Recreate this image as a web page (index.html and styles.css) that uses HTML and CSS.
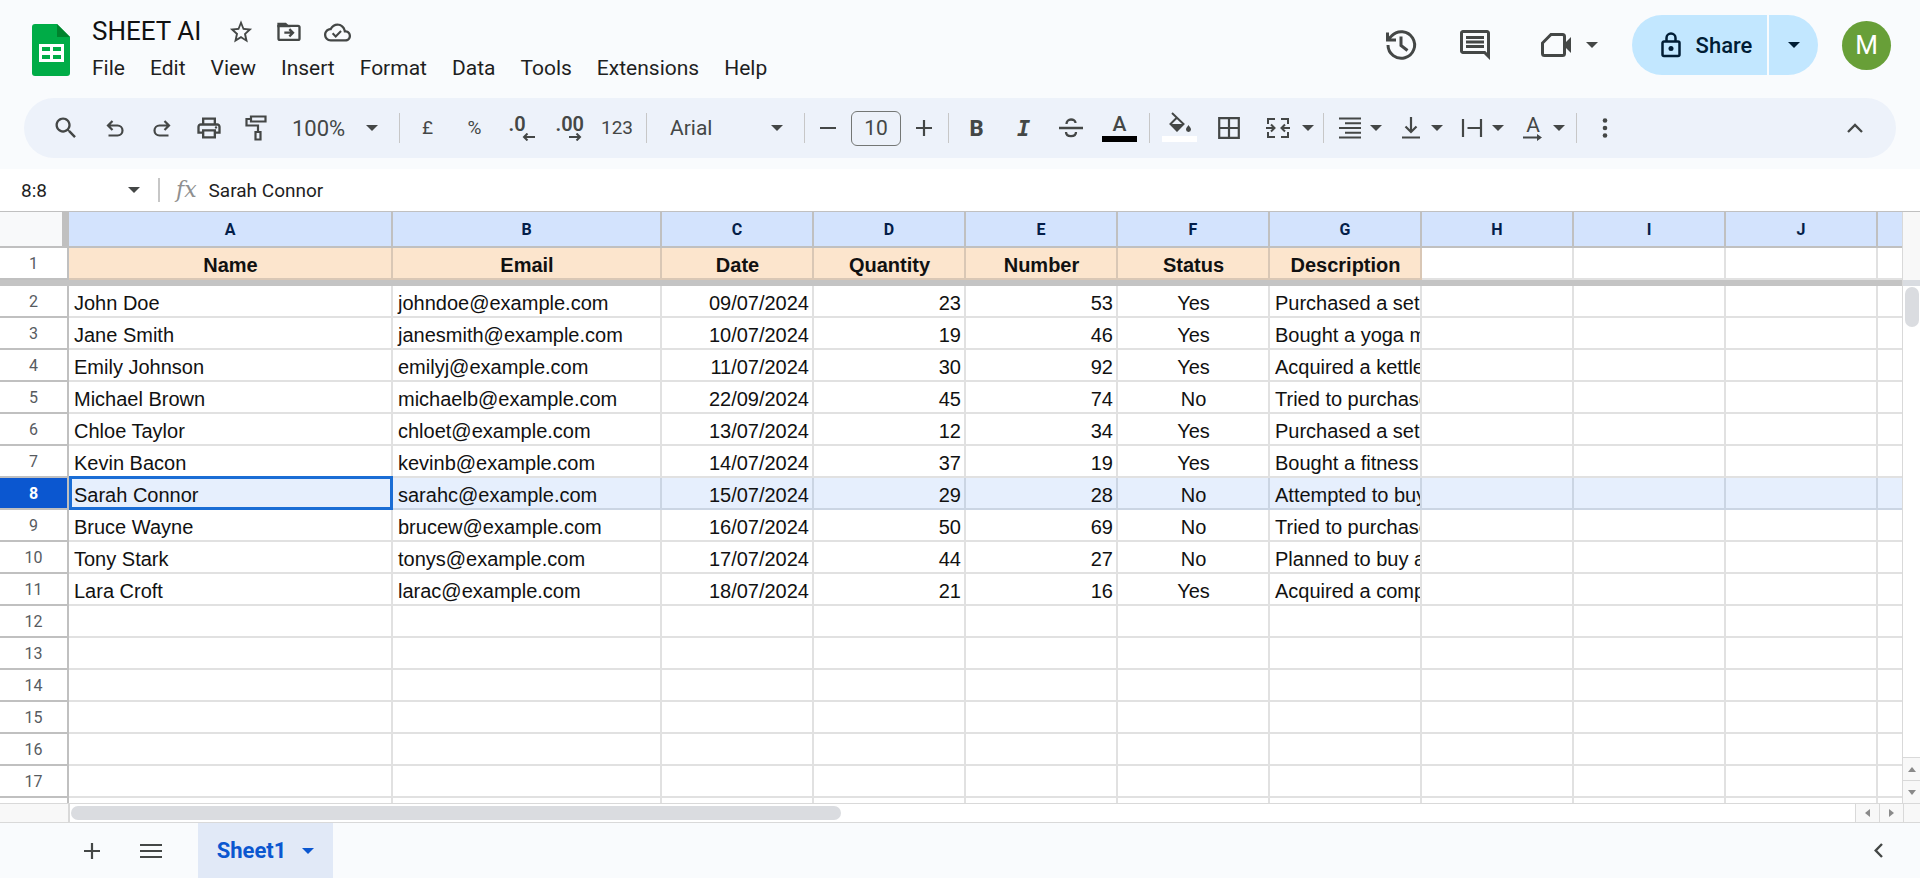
FILE: index.html
```html
<!DOCTYPE html>
<html lang="en">
  <head>
    <meta charset="utf-8">
    <meta name="viewport" content="width=device-width, initial-scale=1">
    <title>SHEET AI</title>
    <link rel="stylesheet" href="styles.css">
  </head>

  <body>
    <!-- shared icons -->
    <svg class="sprite" aria-hidden="true">
      <symbol id="caret" viewBox="0 0 12 6"><path d="M0 0h12L6 6z"/></symbol>
    </svg>

    <header class="header">
      <svg class="logo" viewBox="0 0 38 52">
        <path fill="#00ac47" d="M3 0h22l13 13v36a3 3 0 0 1-3 3H3a3 3 0 0 1-3-3V3a3 3 0 0 1 3-3z"/>
        <path fill="#00832d" d="M25 0l13 13H25z"/>
        <path fill="#fff" fill-rule="evenodd" d="M7 20h25v18H7zM10 23v4h8v-4zM21 23v4h8v-4zM10 31v4h8v-4zM21 31v4h8v-4z"/>
      </svg>

      <div class="doc">
        <div class="doc-title">
          <h1>SHEET AI</h1>
          <button class="title-btn" aria-label="Star">
            <svg width="28" height="28" viewBox="0 0 24 24"><path d="M21.5 9.24l-6.9-.62L12 2 9.4 8.63l-6.9.61 5.16 4.73L6.12 21 12 17.27 17.88 21l-1.53-7.03zM12 15.4l-3.46 2.27.9-4.28-3.12-2.88 4.08-.38L12 6.1l1.6 4.04 4.08.38-3.12 2.88.9 4.28z"/></svg>
          </button>
          <button class="title-btn" aria-label="Move">
            <svg width="28" height="28" viewBox="0 0 24 24" fill="none" stroke="currentColor" stroke-width="2"><path d="M3 6v11.5c0 .8.5 1.3 1.300 1.300h15.400c.8 0 1.300-.5 1.300-1.300V8c0-.8-.5-1.300-1.300-1.300H3M8 12.600h7M12.300 9.500l3.100 3.100-3.100 3.100"/><path d="M3 7V5h6l2 2z" fill="currentColor"/></svg>
          </button>
          <button class="title-btn" aria-label="Document status">
            <svg width="27" height="27" viewBox="0 0 24 24"><path d="M19.35 10.04C18.67 6.59 15.64 4 12 4 9.11 4 6.61 5.64 5.36 8.04 2.35 8.36 0 10.9 0 14c0 3.31 2.69 6 6 6h13c2.76 0 5-2.24 5-5 0-2.64-2.05-4.78-4.65-4.96zM19 18H6c-2.21 0-4-1.79-4-4 0-2.05 1.53-3.76 3.56-3.97l1.07-.11.5-.95C8.08 7.14 9.94 6 12 6c2.62 0 4.88 1.86 5.39 4.43l.3 1.5 1.53.11c1.56.1 2.78 1.41 2.78 2.96 0 1.65-1.35 3-3 3zm-8.600-3.820l-2.090-2.090-1.310 1.310 3.400 3.400 5.400-5.400-1.310-1.310z"/></svg>
          </button>
        </div>
        <nav class="menu">
          <button>File</button>
          <button>Edit</button>
          <button>View</button>
          <button>Insert</button>
          <button>Format</button>
          <button>Data</button>
          <button>Tools</button>
          <button>Extensions</button>
          <button>Help</button>
        </nav>
      </div>

      <div class="actions">
        <button class="action-btn" aria-label="History">
          <svg width="34" height="34" viewBox="0 0 34 34" fill="none" stroke="currentColor" stroke-width="3"><path d="M4 17a13.300 13.300 0 1 0 3.500-9L4 11.500M3.500 4.500V12H12M17 8.500v9l6.500 5"/></svg>
        </button>
        <button class="action-btn" aria-label="Comments">
          <svg width="36" height="36" viewBox="0 0 24 24"><path d="M22 4c0-1.100-.9-2-2-2H4c-1.100 0-2 .9-2 2v12c0 1.100.9 2 2 2h14l4 4zM20 4v13.170L18.830 16H4V4zM6 12h12v2H6zM6 9h12v2H6zM6 6h12v2H6z"/></svg>
        </button>
        <button class="meet-btn" aria-label="Join a call">
          <svg width="30" height="26" viewBox="0 0 30 26"><path fill="none" stroke="currentColor" stroke-width="3" d="M10 2.500h11.500a2 2 0 0 1 2 2v17a2 2 0 0 1-2 2H3.500a2 2 0 0 1-2-2V11z"/><path d="M23 12l7-7v16l-7-7z"/></svg>
          <svg class="caret"><use href="#caret"/></svg>
        </button>
        <div class="share">
          <button class="share-main">
            <svg width="20" height="26" viewBox="0 0 20 26"><path fill="none" stroke="currentColor" stroke-width="2.500" d="M3 9.500h14a1.500 1.500 0 0 1 1.500 1.500v11.500a1.500 1.500 0 0 1-1.500 1.500H3a1.500 1.500 0 0 1-1.500-1.500V11A1.500 1.500 0 0 1 3 9.500zM5.500 9.500V6a4.500 4.500 0 0 1 9 0v3.500"/><circle cx="10" cy="16.500" r="2.500"/></svg>
            Share
          </button>
          <button class="share-more" aria-label="Share options"><svg class="caret"><use href="#caret"/></svg></button>
        </div>
        <button class="avatar">M</button>
      </div>
    </header>

    <div class="toolbar">
      <button class="tb search" aria-label="Search">
        <svg width="28" height="28" viewBox="0 0 24 24"><path d="M15.5 14h-.79l-.28-.27C15.41 12.59 16 11.11 16 9.5 16 5.91 13.09 3 9.5 3S3 5.91 3 9.5 5.91 16 9.5 16c1.61 0 3.09-.59 4.23-1.57l.27.28v.79l5 4.99L20.49 19l-4.99-5zm-6 0C7.01 14 5 11.99 5 9.5S7.01 5 9.5 5 14 7.01 14 9.5 11.99 14 9.5 14z"/></svg>
      </button>
      <button class="tb" aria-label="Undo">
        <svg width="20" height="20" viewBox="0 0 20 20" fill="none" stroke="currentColor" stroke-width="2.200"><path d="M7.500 3L3 7.500 7.500 12M3 7.500h9.500a4.700 4.700 0 0 1 0 10H3.500"/></svg>
      </button>
      <button class="tb" aria-label="Redo">
        <svg width="20" height="20" viewBox="0 0 20 20" fill="none" stroke="currentColor" stroke-width="2.200"><path d="M12.500 3L17 7.500 12.500 12M17 7.500H7.500a4.700 4.700 0 0 0 0 10h9"/></svg>
      </button>
      <button class="tb" aria-label="Print">
        <svg width="28" height="28" viewBox="0 0 24 24"><path fill-rule="evenodd" d="M19 8h-1V3H6v5H5c-1.660 0-3 1.340-3 3v6h4v4h12v-4h4v-6c0-1.660-1.340-3-3-3zM8 5h8v3H8zM16 19H8v-4h8zM18 15v-2H6v2H4v-4c0-.55.45-1 1-1h14c.55 0 1 .45 1 1v4z"/><circle cx="18" cy="11.500" r="1"/></svg>
      </button>
      <button class="tb" aria-label="Paint format">
        <svg width="22" height="26" viewBox="0 0 22 26" fill="none" stroke="currentColor" stroke-width="2.200"><path d="M6 1.500h14.500v5H6zM6 4H1.500v6.500h11.500v6M10.500 17h5v7.500h-5z"/></svg>
      </button>
      <label class="pick zoom">
        <select aria-label="Zoom"><option>100%</option></select>
        <svg class="caret"><use href="#caret"/></svg>
      </label>
      <span class="sep"></span>
      <button class="tb glyph">£</button>
      <button class="tb glyph">%</button>
      <button class="tb decimals" aria-label="Decrease decimal places">
        <span>.0</span>
        <svg width="13" height="8" viewBox="0 0 13 8" fill="none" stroke="currentColor" stroke-width="2"><path d="M13 4H2M5.500 0.500L2 4l3.500 3.500"/></svg>
      </button>
      <button class="tb decimals" aria-label="Increase decimal places">
        <span>.00</span>
        <svg width="13" height="8" viewBox="0 0 13 8" fill="none" stroke="currentColor" stroke-width="2"><path d="M0 4h11M7.500 0.500L11 4 7.500 7.500"/></svg>
      </button>
      <button class="tb glyph wide">123</button>
      <span class="sep"></span>
      <label class="pick font">
        <select aria-label="Font"><option>Arial</option></select>
        <svg class="caret"><use href="#caret"/></svg>
      </label>
      <span class="sep"></span>
      <div class="size">
        <button aria-label="Decrease font size"><svg width="16" height="16" viewBox="0 0 16 16" fill="none" stroke="currentColor" stroke-width="2.200"><path d="M0 8h16"/></svg></button>
        <input type="text" value="10" aria-label="Font size">
        <button aria-label="Increase font size"><svg width="16" height="16" viewBox="0 0 16 16" fill="none" stroke="currentColor" stroke-width="2.200"><path d="M0 8h16M8 0v16"/></svg></button>
      </div>
      <span class="sep"></span>
      <button class="tb bold">B</button>
      <button class="tb italic">I</button>
      <button class="tb" aria-label="Strikethrough">
        <svg width="24" height="22" viewBox="0 0 24 22" fill="none" stroke="currentColor" stroke-width="2.300"><path d="M0 11h24M7.500 7c0-2.500 2-4.500 4.500-4.500S16.500 4 16.500 6M7 15c0 2.500 2 4.200 5 4.200s5-1.700 5-4.200"/></svg>
      </button>
      <button class="tb color">
        <span>A</span>
        <i class="swatch black"></i>
      </button>
      <span class="sep"></span>
      <button class="tb color" aria-label="Fill colour">
        <svg width="24" height="22" viewBox="0 0 24 22"><path fill="none" stroke="currentColor" stroke-width="2" d="M4 1l11.500 11-6.500 6.500L2.500 12 9 5.500"/><path d="M2 12h14l-7 7.500zM20.500 13c1.500 2 2.500 3.300 2.500 4.500a2.500 2.500 0 0 1-5 0c0-1.200 1-2.500 2.500-4.500z"/></svg>
        <i class="swatch"></i>
      </button>
      <button class="tb" aria-label="Borders">
        <svg width="22" height="22" viewBox="0 0 22 22" fill="none" stroke="currentColor" stroke-width="2.200"><path d="M1.200 1.200h19.600v19.600H1.200zM11 1v20M1 11h20"/></svg>
      </button>
      <button class="drop merge" aria-label="Merge cells">
        <svg width="24" height="22" viewBox="0 0 24 22" fill="none" stroke="currentColor" stroke-width="2"><path d="M9 2H2v5M9 20H2v-5M15 2h7v5M15 20h7v-5M0 11h8M5 7.500L8.500 11 5 14.500M24 11h-8M19 7.500L15.500 11l3.500 3.500"/></svg>
        <svg class="caret"><use href="#caret"/></svg>
      </button>
      <span class="sep"></span>
      <button class="drop" aria-label="Horizontal align">
        <svg width="24" height="22" viewBox="0 0 24 22" fill="none" stroke="currentColor" stroke-width="2"><path d="M1 1.500h22M7 6.200h16M1 11h22M7 15.800h16M1 20.500h22"/></svg>
        <svg class="caret"><use href="#caret"/></svg>
      </button>
      <button class="drop" aria-label="Vertical align">
        <svg width="24" height="22" viewBox="0 0 24 22" fill="none" stroke="currentColor" stroke-width="2.200"><path d="M12 0v15M6.500 9.500L12 15l5.500-5.500M3 20.500h18"/></svg>
        <svg class="caret"><use href="#caret"/></svg>
      </button>
      <button class="drop" aria-label="Text wrapping">
        <svg width="24" height="22" viewBox="0 0 24 22" fill="none" stroke="currentColor" stroke-width="2.200"><path d="M3 2v18M21 2v18M7.500 11H21"/></svg>
        <svg class="caret"><use href="#caret"/></svg>
      </button>
      <button class="drop" aria-label="Text rotation">
        <span class="rotate">A
          <svg width="20" height="7" viewBox="0 0 20 7"><path d="M0 2.500h14V0l5 3.500-5 3.500V4.500H0z"/></svg>
        </span>
        <svg class="caret"><use href="#caret"/></svg>
      </button>
      <span class="sep"></span>
      <button class="tb" aria-label="More">
        <svg width="6" height="20" viewBox="0 0 6 20"><circle cx="3" cy="2.500" r="2.300"/><circle cx="3" cy="10" r="2.300"/><circle cx="3" cy="17.500" r="2.300"/></svg>
      </button>
      <button class="tb collapse" aria-label="Hide the menus">
        <svg width="16" height="10" viewBox="0 0 16 10" fill="none" stroke="currentColor" stroke-width="2.300"><path d="M1 9l7-7 7 7"/></svg>
      </button>
    </div>

    <div class="formula-bar">
      <input class="name-box" type="text" value="8:8" aria-label="Name box">
      <button class="name-drop" aria-label="Named ranges"><svg class="caret"><use href="#caret"/></svg></button>
      <label class="fx" for="formula">fx</label>
      <input class="formula" id="formula" type="text" value="Sarah Connor">
    </div>

    <main class="sheet">
      <div class="grid">
        <table>
          <colgroup>
            <col class="c-num"><col class="c-name"><col class="c-email">
            <col class="c-std"><col class="c-std"><col class="c-std"><col class="c-std">
            <col class="c-std"><col class="c-std"><col class="c-std"><col class="c-std"><col>
          </colgroup>
          <thead>
            <tr class="letters"><th class="corner"></th><th>A</th><th>B</th><th>C</th><th>D</th><th>E</th><th>F</th><th>G</th><th>H</th><th>I</th><th>J</th><th></th></tr>
            <tr class="titles"><th>1</th><td>Name</td><td>Email</td><td>Date</td><td>Quantity</td><td>Number</td><td>Status</td><td>Description</td><td></td><td></td><td></td><td></td></tr>
            <tr class="freeze"><td colspan="12"></td></tr>
          </thead>
          <tbody>
            <tr><th>2</th><td>John Doe</td><td>johndoe@example.com</td><td>09/07/2024</td><td>23</td><td>53</td><td>Yes</td><td>Purchased a set</td><td></td><td></td><td></td><td></td></tr>
            <tr><th>3</th><td>Jane Smith</td><td>janesmith@example.com</td><td>10/07/2024</td><td>19</td><td>46</td><td>Yes</td><td>Bought a yoga m</td><td></td><td></td><td></td><td></td></tr>
            <tr><th>4</th><td>Emily Johnson</td><td>emilyj@example.com</td><td>11/07/2024</td><td>30</td><td>92</td><td>Yes</td><td>Acquired a kettle</td><td></td><td></td><td></td><td></td></tr>
            <tr><th>5</th><td>Michael Brown</td><td>michaelb@example.com</td><td>22/09/2024</td><td>45</td><td>74</td><td>No</td><td>Tried to purchase</td><td></td><td></td><td></td><td></td></tr>
            <tr><th>6</th><td>Chloe Taylor</td><td>chloet@example.com</td><td>13/07/2024</td><td>12</td><td>34</td><td>Yes</td><td>Purchased a set</td><td></td><td></td><td></td><td></td></tr>
            <tr><th>7</th><td>Kevin Bacon</td><td>kevinb@example.com</td><td>14/07/2024</td><td>37</td><td>19</td><td>Yes</td><td>Bought a fitness</td><td></td><td></td><td></td><td></td></tr>
            <tr class="selected"><th>8</th><td class="active">Sarah Connor</td><td>sarahc@example.com</td><td>15/07/2024</td><td>29</td><td>28</td><td>No</td><td>Attempted to buy</td><td></td><td></td><td></td><td></td></tr>
            <tr><th>9</th><td>Bruce Wayne</td><td>brucew@example.com</td><td>16/07/2024</td><td>50</td><td>69</td><td>No</td><td>Tried to purchase</td><td></td><td></td><td></td><td></td></tr>
            <tr><th>10</th><td>Tony Stark</td><td>tonys@example.com</td><td>17/07/2024</td><td>44</td><td>27</td><td>No</td><td>Planned to buy a</td><td></td><td></td><td></td><td></td></tr>
            <tr><th>11</th><td>Lara Croft</td><td>larac@example.com</td><td>18/07/2024</td><td>21</td><td>16</td><td>Yes</td><td>Acquired a comp</td><td></td><td></td><td></td><td></td></tr>
            <tr><th>12</th><td></td><td></td><td></td><td></td><td></td><td></td><td></td><td></td><td></td><td></td><td></td></tr>
            <tr><th>13</th><td></td><td></td><td></td><td></td><td></td><td></td><td></td><td></td><td></td><td></td><td></td></tr>
            <tr><th>14</th><td></td><td></td><td></td><td></td><td></td><td></td><td></td><td></td><td></td><td></td><td></td></tr>
            <tr><th>15</th><td></td><td></td><td></td><td></td><td></td><td></td><td></td><td></td><td></td><td></td><td></td></tr>
            <tr><th>16</th><td></td><td></td><td></td><td></td><td></td><td></td><td></td><td></td><td></td><td></td><td></td></tr>
            <tr><th>17</th><td></td><td></td><td></td><td></td><td></td><td></td><td></td><td></td><td></td><td></td><td></td></tr>
            <tr><th></th><td></td><td></td><td></td><td></td><td></td><td></td><td></td><td></td><td></td><td></td><td></td></tr>
          </tbody>
        </table>
      </div>

      <div class="vscroll">
        <div class="vscroll-head"></div>
        <div class="vscroll-track"><div class="thumb"></div></div>
        <button aria-label="Scroll up"><svg width="8" height="5" viewBox="0 0 8 5"><path d="M0 5h8L4 0z"/></svg></button>
        <button aria-label="Scroll down"><svg width="8" height="5" viewBox="0 0 8 5"><path d="M0 0h8L4 5z"/></svg></button>
      </div>
    </main>

    <div class="hscroll">
      <div class="hscroll-head"></div>
      <div class="hscroll-track"><div class="thumb"></div></div>
      <button aria-label="Scroll left"><svg width="5" height="8" viewBox="0 0 5 8"><path d="M5 0v8L0 4z"/></svg></button>
      <button aria-label="Scroll right"><svg width="5" height="8" viewBox="0 0 5 8"><path d="M0 0v8l5-4z"/></svg></button>
      <div class="hscroll-corner"></div>
    </div>

    <footer class="tabs">
      <button class="tab-btn" aria-label="Add sheet"><svg width="16" height="16" viewBox="0 0 16 16" fill="none" stroke="currentColor" stroke-width="2.200"><path d="M0 8h16M8 0v16"/></svg></button>
      <button class="tab-btn" aria-label="All sheets"><svg width="22" height="16" viewBox="0 0 22 16" fill="none" stroke="currentColor" stroke-width="2.200"><path d="M0 2h22M0 8h22M0 14h22"/></svg></button>
      <button class="tab">Sheet1 <svg class="caret"><use href="#caret"/></svg></button>
      <button class="side" aria-label="Show side panel"><svg width="9" height="15" viewBox="0 0 9 15" fill="none" stroke="currentColor" stroke-width="2.400"><path d="M8 1L1.700 7.500 8 14"/></svg></button>
    </footer>
  </body>
</html>
```

FILE: styles.css
```css
* { box-sizing: border-box; }

body {
  margin: 0;
  height: 100vh;
  display: flex;
  flex-direction: column;
  overflow: hidden;
  background: #f9fbfd;
  color: #1f1f1f;
  font-family: Roboto, "Liberation Sans", sans-serif;
  font-size: 21px;
}

button, input, select {
  margin: 0;
  padding: 0;
  border: 0;
  background: none;
  color: inherit;
  font: inherit;
}

button {
  display: flex;
  align-items: center;
  justify-content: center;
  flex: none;
}

svg {
  display: block;
  flex: none;
  fill: currentColor;
}
svg[fill="none"] { fill: none; }

.sprite { display: none; }
.caret {
  width: 12px;
  height: 6px;
}

/* header */
.header {
  flex: none;
  height: 98px;
  display: flex;
  align-items: flex-start;
  padding: 0 29px 0 32px;
}
.logo {
  width: 38px;
  height: 52px;
  margin-top: 24px;
}
.doc {
  padding: 14px 0 0 22px;
}
.doc-title {
  display: flex;
  align-items: center;
  height: 36px;
  color: #444746;
}
h1 {
  margin: 0 16px 0 0;
  color: #111;
  font-size: 26px;
  font-weight: 400;
  line-height: 32px;
  padding-bottom: 2px;
}
.title-btn {
  width: 48px;
  height: 36px;
}
.menu {
  display: flex;
  gap: 25px;
}
.menu button { line-height: 36px; }

.actions {
  display: flex;
  align-items: center;
  height: 60px;
  margin: 15px 0 0 auto;
  color: #444746;
}
.action-btn {
  width: 74px;
  height: 60px;
}
.meet-btn {
  gap: 15px;
  height: 60px;
  padding: 0 34px 0 29px;
}
.share {
  display: flex;
  gap: 2px;
  height: 60px;
  margin-right: 24px;
  color: #001d35;
  font-size: 22px;
  font-weight: 500;
}
.share button { background: #c2e7ff; }
.share-main {
  width: 135px;
  gap: 15px;
  padding-left: 14px;
  border-radius: 30px 0 0 30px;
}
.share-more {
  width: 49px;
  border-radius: 0 30px 30px 0;
}
.avatar {
  width: 49px;
  height: 49px;
  border-radius: 50%;
  background: #689f38;
  color: #fff;
  font-size: 26px;
}

/* toolbar */
.toolbar {
  flex: none;
  display: flex;
  align-items: center;
  height: 60px;
  margin: 0 24px;
  padding: 0 18px;
  overflow: hidden;
  border-radius: 30px;
  background: #edf2fa;
  color: #444746;
}
.tb {
  width: 47px;
  height: 44px;
}
.search { margin-right: 2px; }
.wide { width: 50px; }
.glyph {
  padding-bottom: 2px;
  font-size: 19px;
}
.sep {
  flex: none;
  width: 1px;
  height: 30px;
  margin: 0 4px;
  background: #c7c7c7;
}
.pick {
  flex: none;
  display: grid;
  align-items: center;
}
.pick select {
  grid-area: 1 / 1;
  height: 44px;
  appearance: none;
}
.pick .caret {
  grid-area: 1 / 1;
  justify-self: end;
  margin-right: 17px;
  pointer-events: none;
}
.zoom {
  width: 116px;
  font-size: 22px;
}
.zoom select { padding-left: 13px; }
.font { width: 149px; }
.font select { padding-left: 19px; }
.decimals {
  flex-direction: column;
}
.decimals span {
  width: 26px;
  font-size: 20px;
  font-weight: 600;
  line-height: 18px;
  text-align: left;
}
.decimals svg { margin-left: 13px; }
.size {
  flex: none;
  display: flex;
  align-items: center;
  gap: 4px;
  padding-right: 1px;
}
.size button {
  width: 38px;
  height: 44px;
}
.size input {
  width: 50px;
  height: 35px;
  border: 1px solid #747775;
  border-radius: 6px;
  text-align: center;
}
.bold {
  font-size: 22px;
  font-weight: 800;
}
.italic {
  font: italic bold 22px "DejaVu Sans Mono", monospace;
}
.color {
  flex-direction: column;
  justify-content: flex-end;
  width: 51px;
  gap: 2px;
  padding-bottom: 8px;
}
.color span {
  font-weight: 500;
  line-height: 20px;
}
.swatch {
  width: 35px;
  height: 6px;
  background: #fff;
}
.black { background: #000; }
.drop {
  height: 44px;
  gap: 8px;
  padding: 0 7px 0 10px;
}
.merge {
  gap: 12px;
  padding: 0 5px 0 14px;
}
.rotate {
  display: flex;
  flex-direction: column;
  align-items: center;
  width: 24px;
  line-height: 18px;
}
.collapse { margin-left: auto; }

/* formula bar */
.formula-bar {
  flex: none;
  display: flex;
  align-items: center;
  height: 43px;
  margin-top: 11px;
  border-bottom: 1px solid #c0c0c0;
  background: #fff;
  font-size: 19px;
}
.name-box {
  width: 118px;
  padding-left: 21px;
}
.name-drop {
  width: 32px;
  height: 30px;
  color: #444746;
}
.fx {
  margin-left: 8px;
  padding: 0 12px 0 16px;
  border-left: 2px solid #c7c7c7;
  color: #8f8f8f;
  font: italic 22px/24px "DejaVu Serif", serif;
}
.formula {
  flex: 1;
}

/* sheet */
.sheet {
  flex: 1;
  min-height: 0;
  display: flex;
  background: #fff;
}
.grid {
  flex: 1;
  min-width: 0;
  overflow: hidden;
}
table {
  width: 100%;
  table-layout: fixed;
  border-collapse: separate;
  border-spacing: 0;
}
.c-num { width: 69px; }
.c-name { width: 324px; }
.c-email { width: 269px; }
.c-std { width: 152px; }

th, td {
  height: 32px;
  padding: 0 4px;
  overflow: hidden;
  border: solid #e1e1e1;
  border-width: 0 2px 2px 0;
  white-space: nowrap;
}
td {
  padding: 4px 4px 0 5px;
  color: #111;
  font: 20px/24px "Liberation Sans", Arial, sans-serif;
}
th {
  padding-top: 2px;
  border-color: #c0c0c0;
  color: #575b5f;
  font-size: 16px;
  font-weight: 400;
  line-height: 20px;
}
td:last-child, th:last-child { border-right: 0; }
tbody td:nth-child(4), tbody td:nth-child(5), tbody td:nth-child(6) {
  padding-right: 3px;
  text-align: right;
}
tbody td:nth-child(7) { text-align: center; }
tbody td:nth-child(8) { padding-right: 0; }

.letters th {
  height: 36px;
  background: #d3e3fd;
  color: #041e49;
  font-weight: 700;
}
.letters .corner {
  background: #f8f9fa;
  box-shadow: inset -5px 0 #c0c0c0;
}
.titles td {
  font-weight: 700;
  text-align: center;
}
.titles td:nth-child(-n+8) {
  border-color: #d9c7b5;
  background: #fce5cd;
}
.freeze td {
  height: 6px;
  padding: 0;
  border: 0;
  background: #c4c4c4;
  line-height: 0;
}
.selected td {
  border-color: #cbd5e3;
  background: #e6effd;
}
.selected th {
  background: #0b57d0;
  color: #fff;
  font-weight: 700;
}
.selected .active {
  position: relative;
  overflow: visible;
}
.active::after {
  content: "";
  position: absolute;
  inset: -2px -2px -2px 0;
  border: 3px solid #1a6dd5;
}

/* scrollbars */
.vscroll {
  flex: none;
  display: flex;
  flex-direction: column;
  width: 18px;
  border-left: 1px solid #d9d9d9;
}
.vscroll-head {
  height: 74px;
  border-bottom: 6px solid #d9dce1;
  background: #f8f8f8;
}
.vscroll-track {
  flex: 1;
  padding: 1px 1px 0 2px;
}
.thumb {
  border-radius: 7px;
  background: #dadce0;
}
.vscroll .thumb { height: 40px; }
.vscroll button {
  width: 17px;
  height: 23px;
  border-top: 1px solid #d9d9d9;
  background: #f8f8f8;
  color: #8a8a8a;
}
.hscroll {
  flex: none;
  display: flex;
  height: 20px;
  border: solid #d9d9d9;
  border-width: 1px 0;
  background: #fff;
}
.hscroll-head {
  width: 70px;
  border-right: 2px solid #d9d9d9;
  background: #f8f8f8;
}
.hscroll-track {
  flex: 1;
  padding: 2px 1px;
}
.hscroll .thumb {
  width: 43.2%;
  height: 14px;
}
.hscroll button {
  width: 24px;
  border-left: 1px solid #d9d9d9;
  background: #f8f8f8;
  color: #8a8a8a;
}
.hscroll-corner {
  width: 17px;
  border-left: 1px solid #d9d9d9;
  background: #f8f8f8;
}

/* sheet tabs */
.tabs {
  flex: none;
  display: flex;
  height: 55px;
  padding: 0 18px 0 62px;
  color: #444746;
}
.tab-btn { width: 59px; }
.tab {
  width: 135px;
  gap: 16px;
  margin-left: 18px;
  background: #e1e9f7;
  color: #0b57d0;
  font-size: 22px;
  font-weight: 700;
}
.side {
  width: 48px;
  margin-left: auto;
}
```
